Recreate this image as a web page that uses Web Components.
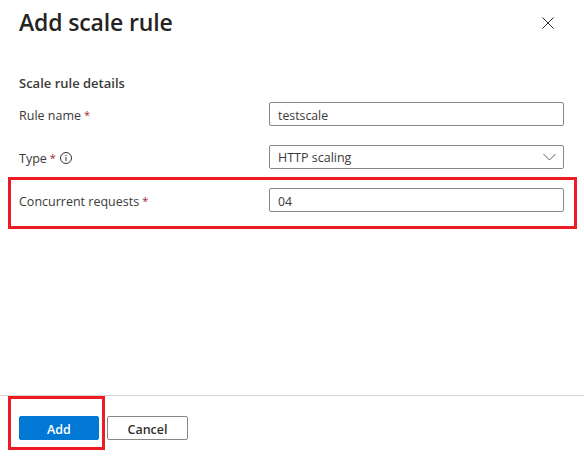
<!DOCTYPE html>
<html>
<head>
<meta charset="utf-8">
<style>
  html, body { margin: 0; background: #fff; }
  body { font-family: "Open Sans", "Noto Sans", sans-serif; color: #3b3a39; }
</style>
</head>
<body>
<scale-panel heading="Add scale rule">
  <form-section>Scale rule details</form-section>
  <form-row label="Rule name" required><text-box value="testscale"></text-box></form-row>
  <form-row label="Type" required info><select-box value="HTTP scaling"></select-box></form-row>
  <form-row label="Concurrent requests" required highlight><text-box value="04"></text-box></form-row>
  <action-button slot="footer" primary highlight>Add</action-button>
  <action-button slot="footer">Cancel</action-button>
</scale-panel>

<script>
class ScalePanel extends HTMLElement {
  constructor() {
    super();
    this.attachShadow({ mode: 'open' });
    this.shadowRoot.innerHTML = `
      <style>
        :host { display: flex; flex-direction: column; width: 584px; height: 456px; box-sizing: border-box; }
        header { display: flex; justify-content: space-between; align-items: center; height: 46px; padding: 0 30px 0 19px; }
        h1 { margin: 0 0 2px; font-size: 23px; font-weight: 600; line-height: 44px; color: #252423; letter-spacing: -0.15px; }
        svg { display: block; }
        main { flex: 1; padding: 28px 20px 0 19px; }
        footer { display: flex; gap: 8px; height: 61px; padding: 20px 0 0 19px; box-sizing: border-box; border-top: 1px solid #d6d6d6; }
      </style>
      <header>
        <h1>${this.getAttribute('heading') || ''}</h1>
        <svg width="12" height="12" viewBox="0 0 12 12" fill="none" stroke="#323130" stroke-width="1"><path d="M.5.5l11 11M11.5.5l-11 11"/></svg>
      </header>
      <main><slot></slot></main>
      <footer><slot name="footer"></slot></footer>
    `;
  }
}

class FormSection extends HTMLElement {
  constructor() {
    super();
    this.attachShadow({ mode: 'open' });
    this.shadowRoot.innerHTML = `
      <style>
        :host { display: block; height: 28px; font-size: 13px; font-weight: 600; line-height: 18px; }
      </style>
      <slot></slot>
    `;
  }
}

class FormRow extends HTMLElement {
  constructor() {
    super();
    this.attachShadow({ mode: 'open' });
    const star = this.hasAttribute('required') ? '<span class="star">*</span>' : '';
    const info = this.hasAttribute('info')
      ? `<svg width="12" height="12" viewBox="0 0 12 12" fill="none" stroke="#323130"><circle cx="6" cy="6" r="5.5"/><path d="M6 5v4M6 3v1.2"/></svg>`
      : '';
    this.shadowRoot.innerHTML = `
      <style>
        :host { display: grid; grid-template-columns: 250px 295px; align-items: center; height: 24px; margin-bottom: 19px; position: relative; font-size: 12.5px; }
        :host([highlight])::after { content: ""; position: absolute; inset: -11px -13px -17px -11px; border: 3px solid #ed1c24; pointer-events: none; }
        .label { display: flex; align-items: center; gap: 4px; padding-top: 2px; }
        .star { color: #a4262c; font-size: 11px; margin: -2px 0 0 -1px; }
        svg { display: block; margin-top: -1px; }
      </style>
      <div class="label"><span>${this.getAttribute('label')}</span>${star}${info}</div>
      <slot></slot>
    `;
  }
}

class TextBox extends HTMLElement {
  constructor() {
    super();
    this.attachShadow({ mode: 'open' });
    this.shadowRoot.innerHTML = `
      <style>
        :host { display: flex; align-items: center; height: 24px; box-sizing: border-box; padding: 2px 8px 0; border: 1px solid #8a8886; border-radius: 2px; font-size: 12.3px; }
      </style>
      <span>${this.getAttribute('value') || ''}</span>
    `;
  }
}

class SelectBox extends HTMLElement {
  constructor() {
    super();
    this.attachShadow({ mode: 'open' });
    this.shadowRoot.innerHTML = `
      <style>
        :host { display: flex; align-items: center; justify-content: space-between; height: 24px; box-sizing: border-box; padding: 0 7px 0 8px; border: 1px solid #8a8886; border-radius: 2px; font-size: 12.5px; }
        span { padding-top: 1px; }
        svg { display: block; }
      </style>
      <span>${this.getAttribute('value') || ''}</span>
      <svg width="13" height="8" viewBox="0 0 13 8" fill="none" stroke="#605e5c"><path d="M.5 1l6 6 6-6"/></svg>
    `;
  }
}

class ActionButton extends HTMLElement {
  constructor() {
    super();
    this.attachShadow({ mode: 'open' });
    this.shadowRoot.innerHTML = `
      <style>
        :host { display: flex; align-items: center; justify-content: center; width: 81px; height: 24px; box-sizing: border-box; padding-top: 2px; position: relative; border: 1px solid #8a8886; border-radius: 2px; font-size: 12.5px; font-weight: 600; color: #323130; background: #fff; }
        :host([primary]) { width: 80px; border-color: #0078d4; background: #0078d4; color: #fff; }
        :host([highlight])::after { content: ""; position: absolute; inset: -21px -7px -11px -12px; border: 3px solid #ed1c24; pointer-events: none; }
      </style>
      <slot></slot>
    `;
  }
}

customElements.define('scale-panel', ScalePanel);
customElements.define('form-section', FormSection);
customElements.define('form-row', FormRow);
customElements.define('text-box', TextBox);
customElements.define('select-box', SelectBox);
customElements.define('action-button', ActionButton);
</script>
</body>
</html>
